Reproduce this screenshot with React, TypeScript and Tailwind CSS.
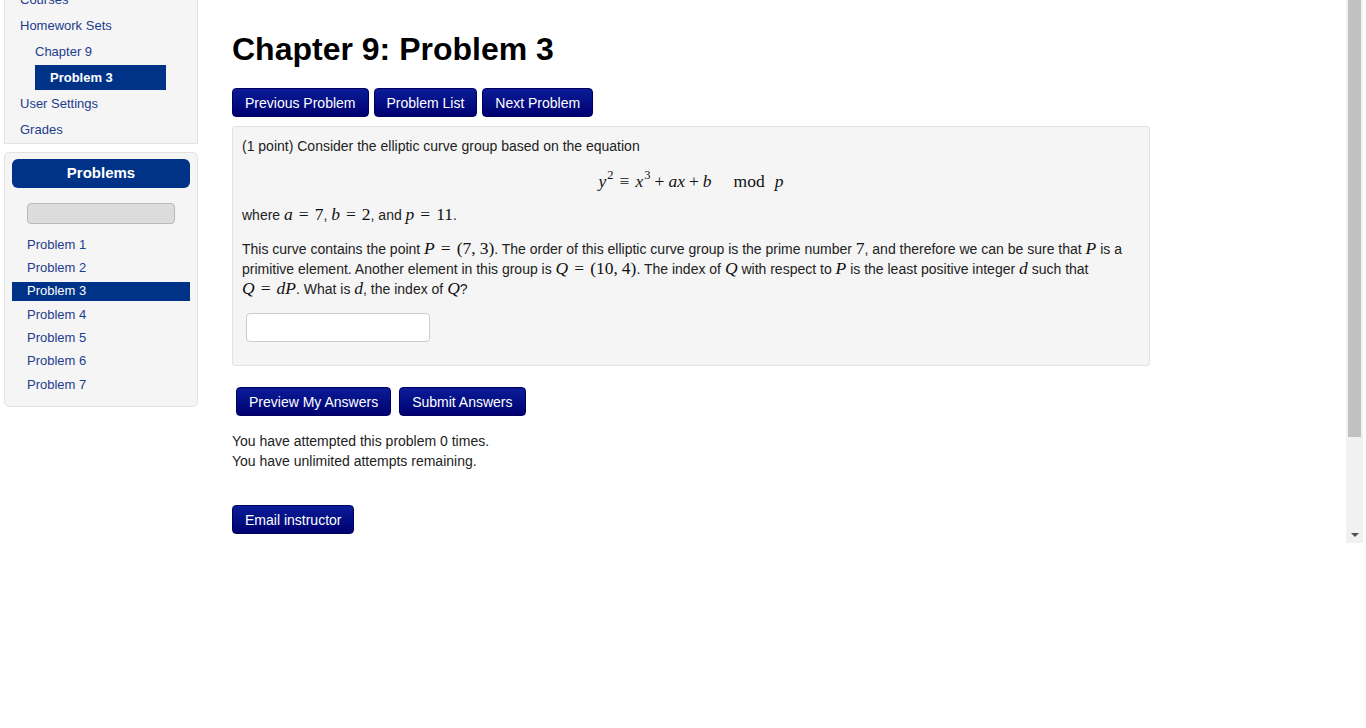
import React from "react";

const MF = "font-['Liberation_Serif',serif] text-[17.5px] leading-[14px] text-[#111]";

const V = ({ children }: { children: React.ReactNode }) => <i className={MF}>{children}</i>;
const N = ({ children }: { children: React.ReactNode }) => <span className={MF}>{children}</span>;
const Rel = ({ children }: { children: React.ReactNode }) => <span className={MF + " mx-[6px]"}>{children}</span>;
const Bin = ({ children }: { children: React.ReactNode }) => <span className={MF + " mx-[4px]"}>{children}</span>;
const Pair = ({ a, b }: { a: string; b: string }) => (
  <span className={MF}>
    ({a},<span className="ml-[4px]">{b}</span>)
  </span>
);

const Btn = ({ children, className = "" }: { children: React.ReactNode; className?: string }) => (
  <button
    className={
      "h-[29px] px-[12px] rounded-[4px] border border-[#00005e] bg-gradient-to-b from-[#0c1c98] to-[#000070] text-white text-[14px] leading-none font-['Liberation_Sans',Arial,sans-serif] " +
      className
    }
  >
    {children}
  </button>
);

export default function App() {
  const nav = [
    { label: "Courses", indent: 0 },
    { label: "Homework Sets", indent: 0 },
    { label: "Chapter 9", indent: 1 },
    { label: "Problem 3", indent: 2, active: true },
    { label: "User Settings", indent: 0 },
    { label: "Grades", indent: 0 },
  ];
  const problems = [1, 2, 3, 4, 5, 6, 7];
  return (
    <div className="w-[1366px] h-[728px] bg-white font-['Liberation_Sans',Arial,sans-serif] text-[#333] overflow-hidden">
      <div className="flex h-[543px] w-[1363px]">
        <div className="w-[1346px] h-full overflow-hidden flex">
          {/* Sidebar */}
          <div className="ml-[4px] w-[194px] shrink-0">
            <div className="mt-[-14px] border border-[#e3e3e3] bg-[#f5f5f5]">
              {nav.map((n) => (
                <div key={n.label} className={"h-[26px] flex " + (n.active ? "items-start" : "items-center")}>
                  {n.active ? (
                    <div className="ml-[30px] w-[131px] h-[25px] bg-[#003388] text-white text-[13px] font-bold flex items-center pl-[15px]">
                      {n.label}
                    </div>
                  ) : (
                    <span
                      className={
                        "text-[13px] text-[#1d3c8c] " + (n.indent === 1 ? "ml-[30px]" : "ml-[15px]")
                      }
                    >
                      {n.label}
                    </span>
                  )}
                </div>
              ))}
            </div>
            <div className="mt-[8px] border border-[#e3e3e3] bg-[#f5f5f5] rounded-[5px] px-[7px] pt-[6px] pb-[12px]">
              <div className="h-[29px] rounded-[6px] bg-[#003388] text-white font-bold text-[15px] flex items-center justify-center">
                Problems
              </div>
              <div className="mt-[15px] ml-[15px] w-[148px] h-[21px] rounded-[4px] bg-[#dcdcdc] border border-[#b9b9b9]" />
              <div className="mt-[11px] flex flex-col gap-[4.33px]">
                {problems.map((p) => (
                  <div
                    key={p}
                    className={
                      "h-[19px] flex items-center pl-[15px] text-[13px] " +
                      (p === 3 ? "bg-[#003388] text-white" : "text-[#1d3c8c]")
                    }
                  >
                    Problem {p}
                  </div>
                ))}
              </div>
            </div>
          </div>

          {/* Main */}
          <div className="ml-[34px] w-[918px] shrink-0">
            <h1 className="mt-[31px] text-[32px] leading-[36px] font-bold text-black">Chapter 9: Problem 3</h1>
            <div className="mt-[21px] flex gap-[5px]">
              <Btn>Previous Problem</Btn>
              <Btn>Problem List</Btn>
              <Btn>Next Problem</Btn>
            </div>
            <div className="mt-[9px] h-[240px] border border-[#e3e3e3] bg-[#f5f5f5] rounded-[3px] px-[9px] pt-[9px] text-[14px] leading-[20px] text-[#222]">
              <div>(1 point) Consider the elliptic curve group based on the equation</div>
              <div className="mt-[15px] h-[20px] flex items-center justify-center">
                <V>y</V>
                <sup className="font-['Liberation_Serif',serif] text-[12.5px] text-[#111] ml-[1px]">2</sup>
                <Rel>≡</Rel>
                <V>x</V>
                <sup className="font-['Liberation_Serif',serif] text-[12.5px] text-[#111] ml-[1px]">3</sup>
                <Bin>+</Bin>
                <V>ax</V>
                <Bin>+</Bin>
                <V>b</V>
                <span className={MF + " ml-[22px] mr-[10px]"}>mod</span>
                <V>p</V>
              </div>
              <div className="mt-[14px]">
                where <V>a</V>
                <Rel>=</Rel>
                <N>7</N>, <V>b</V>
                <Rel>=</Rel>
                <N>2</N>, and <V>p</V>
                <Rel>=</Rel>
                <N>11</N>.
              </div>
              <p className="mt-[14px]">
                This curve contains the point <V>P</V>
                <Rel>=</Rel>
                <Pair a="7" b="3" />. The order of this elliptic curve group is the prime number <N>7</N>, and
                therefore we can be sure that <V>P</V> is a primitive element. Another element in this group is{" "}
                <V>Q</V>
                <Rel>=</Rel>
                <Pair a="10" b="4" />. The index of <V>Q</V> with respect to <V>P</V> is the least positive integer{" "}
                <V>d</V> such that
                <br />
                <V>Q</V>
                <Rel>=</Rel>
                <V>dP</V>. What is <V>d</V>, the index of <V>Q</V>?
              </p>
              <input
                className="mt-[14px] ml-[4px] block w-[184px] h-[29px] bg-white border border-[#cccccc] rounded-[4px] outline-none"
                type="text"
              />
            </div>
            <div className="mt-[21px] ml-[4px] flex gap-[8px]">
              <Btn>Preview My Answers</Btn>
              <Btn>Submit Answers</Btn>
            </div>
            <div className="mt-[15px] text-[14px] leading-[20px] text-[#222]">
              <div>You have attempted this problem 0 times.</div>
              <div>You have unlimited attempts remaining.</div>
            </div>
            <div className="mt-[34px]">
              <Btn>Email instructor</Btn>
            </div>
          </div>
        </div>

        {/* Scrollbar */}
        <div className="w-[17px] h-full bg-[#f1f1f1] flex flex-col">
          <div className="mx-[2px] h-[437px] bg-[#c1c1c1]" />
          <div className="flex-1" />
          <div className="h-[17px] flex items-center justify-center">
            <div className="w-0 h-0 border-l-[4px] border-r-[4px] border-t-[4px] border-l-transparent border-r-transparent border-t-[#505050]" />
          </div>
        </div>
      </div>
    </div>
  );
}
